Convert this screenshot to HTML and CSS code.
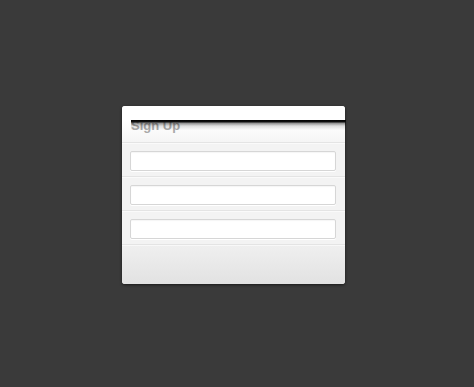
FILE: index.html
```html
<!DOCTYPE html>
<html>
<head>
<meta charset="utf-8">
<link rel="stylesheet" href="styles.css">
</head>
<body>
<div class="stage">
  <form class="card">
    <div class="card-head">
      <h1 class="title">Sign Up</h1>
      <span class="bar"></span>
    </div>
    <div class="row"><input class="field" type="text"></div>
    <div class="row"><input class="field" type="text"></div>
    <div class="row"><input class="field" type="password"></div>
    <div class="card-foot"></div>
  </form>
</div>
</body>
</html>
```
FILE: styles.css
```css
html, body {
  margin: 0;
  padding: 0;
  background: #3a3a3a;
  height: 100%;
}
.stage {
  padding: 106px 0 0 122px;
  display: flex;
  align-items: flex-start;
}
.card {
  margin: 0;
  width: 223px;
  border-radius: 3px;
  background: #f3f3f3;
  box-shadow: 0 1px 3px rgba(0,0,0,0.55);
  display: flex;
  flex-direction: column;
  font-family: "Liberation Sans", Arial, sans-serif;
}
.card-head {
  position: relative;
  height: 36px;
  padding-left: 9px;
  border-radius: 3px 3px 0 0;
  background: linear-gradient(#ffffff 0, #ffffff 40%, #f5f5f5 100%);
  border-bottom: 1px solid #e4e4e4;
}
.title {
  margin: 0;
  padding-top: 12px;
  font-size: 13px;
  line-height: 16px;
  font-weight: bold;
  color: #a9a9a9;
}
.bar {
  position: absolute;
  top: 14px;
  left: 9px;
  right: -1px;
  height: 10px;
  background: linear-gradient(to bottom, #000 0, #111 2px, rgba(0,0,0,0.45) 3px, rgba(0,0,0,0.12) 6px, rgba(0,0,0,0) 10px);
}
.row {
  padding: 7px 9px 5px 8px;
  border-top: 1px solid #fafafa;
  border-bottom: 1px solid #e4e4e4;
  background: #f3f3f3;
  display: flex;
}
.field {
  flex: 1;
  height: 20px;
  box-sizing: border-box;
  margin: 0;
  border: 1px solid #d6d6d6;
  border-radius: 2px;
  background: #fff;
  box-shadow: inset 0 1px 1px rgba(0,0,0,0.04), 0 1px 0 #fff;
  outline: none;
}
.card-foot {
  height: 38px;
  border-top: 1px solid #f8f8f8;
  border-radius: 0 0 3px 3px;
  background: linear-gradient(#efefef, #e2e2e2);
}
```
